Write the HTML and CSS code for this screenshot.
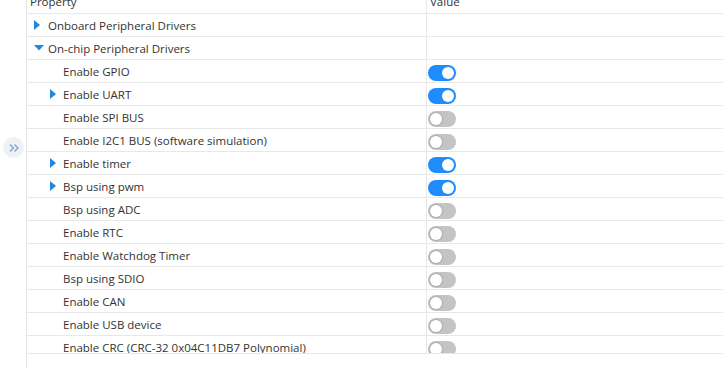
FILE: index.html
```html
<!DOCTYPE html>
<html>
<head>
<meta charset="utf-8">
<link rel="stylesheet" href="styles.css">
</head>
<body>
<div class="page">
  <aside class="side">
    <button class="expand" aria-label="expand">
      <svg width="12" height="10" viewBox="0 0 12 10"><polyline points="2,1.5 5.5,5 2,8.5" fill="none" stroke="#7ea0c8" stroke-width="1.3"/><polyline points="6.5,1.5 10,5 6.5,8.5" fill="none" stroke="#7ea0c8" stroke-width="1.3"/></svg>
    </button>
  </aside>
  <main class="main">
    <div class="table">
      <div class="inner">
        <div class="row head"><div class="c1 pad-h">Property</div><div class="c2 pad-v">Value</div></div>

        <div class="row"><div class="c1 l0"><span class="tw"><svg width="6" height="10" viewBox="0 0 6 10"><polygon points="0,0 6,5 0,10" fill="#1e88e5"/></svg></span>Onboard Peripheral Drivers</div><div class="c2"></div></div>
        <div class="row"><div class="c1 l0"><span class="tw"><svg width="10" height="6" viewBox="0 0 10 6"><polygon points="0,0 10,0 5,5.5" fill="#1e88e5"/></svg></span>On-chip Peripheral Drivers</div><div class="c2"></div></div>

        <div class="row"><div class="c1 l1"><span class="tw"></span>Enable GPIO</div><div class="c2"><span class="sw on"></span></div></div>
        <div class="row"><div class="c1 l1"><span class="tw"><svg width="6" height="10" viewBox="0 0 6 10"><polygon points="0,0 6,5 0,10" fill="#1e88e5"/></svg></span>Enable UART</div><div class="c2"><span class="sw on"></span></div></div>
        <div class="row"><div class="c1 l1"><span class="tw"></span>Enable SPI BUS</div><div class="c2"><span class="sw"></span></div></div>
        <div class="row"><div class="c1 l1"><span class="tw"></span>Enable I2C1 BUS (software simulation)</div><div class="c2"><span class="sw"></span></div></div>
        <div class="row"><div class="c1 l1"><span class="tw"><svg width="6" height="10" viewBox="0 0 6 10"><polygon points="0,0 6,5 0,10" fill="#1e88e5"/></svg></span>Enable timer</div><div class="c2"><span class="sw on"></span></div></div>
        <div class="row"><div class="c1 l1"><span class="tw"><svg width="6" height="10" viewBox="0 0 6 10"><polygon points="0,0 6,5 0,10" fill="#1e88e5"/></svg></span>Bsp using pwm</div><div class="c2"><span class="sw on"></span></div></div>
        <div class="row"><div class="c1 l1"><span class="tw"></span>Bsp using ADC</div><div class="c2"><span class="sw"></span></div></div>
        <div class="row"><div class="c1 l1"><span class="tw"></span>Enable RTC</div><div class="c2"><span class="sw"></span></div></div>
        <div class="row"><div class="c1 l1"><span class="tw"></span>Enable Watchdog Timer</div><div class="c2"><span class="sw"></span></div></div>
        <div class="row"><div class="c1 l1"><span class="tw"></span>Bsp using SDIO</div><div class="c2"><span class="sw"></span></div></div>
        <div class="row"><div class="c1 l1"><span class="tw"></span>Enable CAN</div><div class="c2"><span class="sw"></span></div></div>
        <div class="row"><div class="c1 l1"><span class="tw"></span>Enable USB device</div><div class="c2"><span class="sw"></span></div></div>
        <div class="row"><div class="c1 l1"><span class="tw"></span>Enable CRC (CRC-32 0x04C11DB7 Polynomial)</div><div class="c2"><span class="sw"></span></div></div>
      </div>
    </div>
  </main>
</div>
</body>
</html>
```
FILE: styles.css
```css
* { box-sizing: border-box; }
html, body { margin: 0; padding: 0; background: #fff; }
body {
  font-family: "Open Sans", "Noto Sans", sans-serif;
  font-size: 11.5px;
  color: #333;
  overflow: hidden;
}
.page { display: flex; width: 723px; height: 368px; }
.side {
  width: 27px;
  border-right: 1px solid #e6e6e6;
  padding-top: 137px;
  display: flex;
  flex-direction: column;
  align-items: flex-start;
}
.expand {
  width: 21px; height: 21px;
  margin-left: 3px;
  border: 0; padding: 0;
  border-radius: 50%;
  background: #eef2f7;
  display: flex; align-items: center; justify-content: center;
}
.main { flex: 1; min-width: 0; }
.table {
  height: 354px;
  overflow: hidden;
  border-bottom: 1px solid #e8e8e8;
}
.inner { margin-top: -10px; }
.row {
  display: grid;
  grid-template-columns: 400px 1fr;
  height: 23px;
  border-bottom: 1px solid #e8e8e8;
}
.row.head { height: 24px; }
.c1 {
  border-right: 1px solid #e8e8e8;
  display: flex;
  align-items: center;
  white-space: nowrap;
}
.c2 { display: flex; align-items: center; padding-left: 1px; }
.pad-h { padding-left: 3px; }
.pad-v { padding-left: 3px; }
.l0 { padding-left: 7px; }
.l1 { padding-left: 23px; }
.tw {
  width: 14px;
  display: inline-flex;
  align-items: center;
}
.l0 .tw { width: 14px; }
.l1 .tw { width: 13px; }
.sw {
  position: relative;
  display: inline-block;
  width: 28px; height: 16px;
  margin-top: 3px;
  border-radius: 8px;
  background: #c4c4c4;
}
.sw::after {
  content: "";
  position: absolute;
  top: 2px; left: 2px;
  width: 12px; height: 12px;
  border-radius: 50%;
  background: #fff;
  box-shadow: 0 0 1px 1px rgba(0,0,0,0.12);
}
.sw.on { background: #1e8cfa; }
.sw.on::after { left: 14px; box-shadow: none; }
```
